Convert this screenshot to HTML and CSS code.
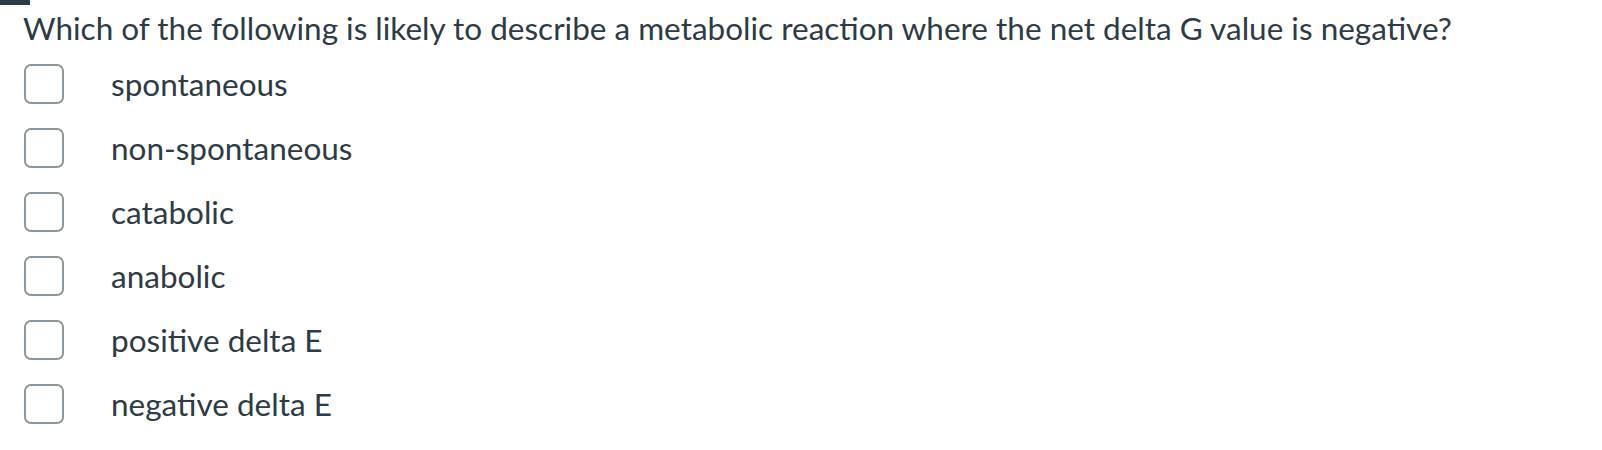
FILE: index.html
```html
<!DOCTYPE html>
<html>
<head>
<meta charset="utf-8">
<link rel="stylesheet" href="styles.css">
</head>
<body>
<div class="tab"></div>
<div class="question">
  <p class="prompt">Which of the following is likely to describe a metabolic reaction where the net delta G value is negative?</p>
  <div class="answers">
    <label class="answer"><span class="box"></span><span class="text">spontaneous</span></label>
    <label class="answer"><span class="box"></span><span class="text">non-spontaneous</span></label>
    <label class="answer"><span class="box"></span><span class="text">catabolic</span></label>
    <label class="answer"><span class="box"></span><span class="text">anabolic</span></label>
    <label class="answer"><span class="box"></span><span class="text">positive delta E</span></label>
    <label class="answer"><span class="box"></span><span class="text">negative delta E</span></label>
  </div>
</div>
</body>
</html>
```
FILE: styles.css
```css
html, body {
  margin: 0;
  padding: 0;
  background: #ffffff;
}
body {
  font-family: Lato, "Open Sans", sans-serif;
  color: #2d3b45;
  width: 1602px;
  height: 450px;
  overflow: hidden;
}
.tab {
  width: 30px;
  height: 5px;
  background: #2d3b45;
}
.question {
  padding-left: 23px;
}
.prompt {
  margin: 0;
  padding-top: 2px;
  font-size: 31.5px;
  line-height: 42px;
  height: 42px;
}
.answers {
  display: flex;
  flex-direction: column;
  padding-top: 15px;
  gap: 24px;
}
.answer {
  display: flex;
  align-items: center;
  height: 40px;
}
.box {
  box-sizing: border-box;
  width: 40px;
  height: 40px;
  margin-left: 1px;
  border: 2px solid #8b969e;
  border-radius: 7px;
  flex: none;
}
.text {
  margin-left: 47px;
  font-size: 31.5px;
  line-height: 40px;
}
```
